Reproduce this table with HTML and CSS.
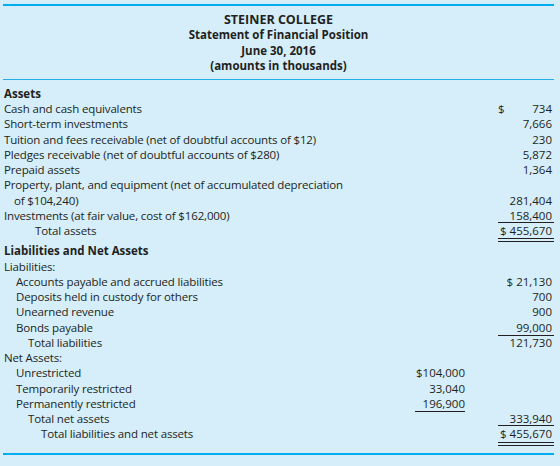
FILE: index.html
```html
<!DOCTYPE html>
<html>
<head>
<meta charset="utf-8">
<link rel="stylesheet" href="styles.css">
</head>
<body>
<div class="sheet">
  <header class="head">
    <div class="title">STEINER COLLEGE</div>
    <div>Statement of Financial Position</div>
    <div>June 30, 2016</div>
    <div>(amounts in thousands)</div>
  </header>
  <section class="lines">
    <div class="row"><span class="label heading">Assets</span></div>
    <div class="row"><span class="label">Cash and cash equivalents</span><span class="mid"></span><span class="amt split"><span>$</span><span>734</span></span></div>
    <div class="row"><span class="label">Short-term investments</span><span class="mid"></span><span class="amt">7,666</span></div>
    <div class="row"><span class="label">Tuition and fees receivable (net of doubtful accounts of $12)</span><span class="mid"></span><span class="amt">230</span></div>
    <div class="row"><span class="label">Pledges receivable (net of doubtful accounts of $280)</span><span class="mid"></span><span class="amt">5,872</span></div>
    <div class="row"><span class="label">Prepaid assets</span><span class="mid"></span><span class="amt">1,364</span></div>
    <div class="row"><span class="label">Property, plant, and equipment (net of accumulated depreciation</span><span class="mid"></span><span class="amt"></span></div>
    <div class="row"><span class="label ind1">of $104,240)</span><span class="mid"></span><span class="amt">281,404</span></div>
    <div class="row"><span class="label">Investments (at fair value, cost of $162,000)</span><span class="mid"></span><span class="amt">158,400</span></div>
    <div class="row"><span class="label ind-ta">Total assets</span><span class="mid"></span><span class="amt over dbl">$ 455,670</span></div>

    <div class="row section"><span class="label heading">Liabilities and Net Assets</span></div>
    <div class="row"><span class="label">Liabilities:</span></div>
    <div class="row"><span class="label ind2">Accounts payable and accrued liabilities</span><span class="mid"></span><span class="amt">$ 21,130</span></div>
    <div class="row"><span class="label ind2">Deposits held in custody for others</span><span class="mid"></span><span class="amt">700</span></div>
    <div class="row"><span class="label ind2">Unearned revenue</span><span class="mid"></span><span class="amt">900</span></div>
    <div class="row"><span class="label ind2">Bonds payable</span><span class="mid"></span><span class="amt under">99,000</span></div>
    <div class="row"><span class="label ind3">Total liabilities</span><span class="mid"></span><span class="amt">121,730</span></div>
    <div class="row"><span class="label">Net Assets:</span></div>
    <div class="row"><span class="label ind2">Unrestricted</span><span class="mid">$104,000</span><span class="amt"></span></div>
    <div class="row"><span class="label ind2">Temporarily restricted</span><span class="mid">33,040</span><span class="amt"></span></div>
    <div class="row"><span class="label ind2">Permanently restricted</span><span class="mid under">196,900</span><span class="amt"></span></div>
    <div class="row"><span class="label ind3">Total net assets</span><span class="mid"></span><span class="amt">333,940</span></div>
    <div class="row"><span class="label ind4">Total liabilities and net assets</span><span class="mid"></span><span class="amt over dbl">$ 455,670</span></div>
  </section>
</div>
</body>
</html>
```

FILE: styles.css
```css
html, body {
  margin: 0;
  padding: 0;
  background: #d5eefa;
}

body {
  font-family: "Open Sans", "Noto Sans", sans-serif;
  font-size: 11.5px;
  color: #231f20;
}

.sheet {
  width: 551px;
  margin: 4px 0 0 3px;
  border-top: 2px solid #00adef;
  border-bottom: 2px solid #00adef;
}

.head {
  text-align: center;
  font-weight: bold;
  font-size: 11.5px;
  line-height: 15.6px;
  padding: 6px 0 5px;
  border-bottom: 1px solid #23aee6;
}

.head .title {
  font-size: 12.5px;
  line-height: 15.2px;
}

.lines {
  padding: 6px 0 11px 1px;
}

.row {
  display: flex;
  line-height: 15.25px;
  white-space: nowrap;
}

.row.section {
  margin-top: 5px;
}

.label {
  flex: 1;
  letter-spacing: -0.15px;
}

.heading {
  font-weight: bold;
  letter-spacing: 0;
}

.ind1 { padding-left: 10px; }
.ind2 { padding-left: 12px; }
.ind3 { padding-left: 24px; }
.ind4 { padding-left: 37px; }
.ind-ta { padding-left: 31px; }

.mid {
  width: 50px;
  text-align: right;
}

.amt {
  width: 54px;
  padding-right: 2px;
  margin-left: 33px;
  text-align: right;
}

.amt.split {
  display: flex;
  justify-content: space-between;
}

.over {
  border-top: 1px solid #231f20;
  margin-top: -1px;
}

.under {
  border-bottom: 1px solid #231f20;
  margin-bottom: -1px;
}

.dbl {
  border-bottom: 4px double #231f20;
  margin-bottom: -4px;
}
```
